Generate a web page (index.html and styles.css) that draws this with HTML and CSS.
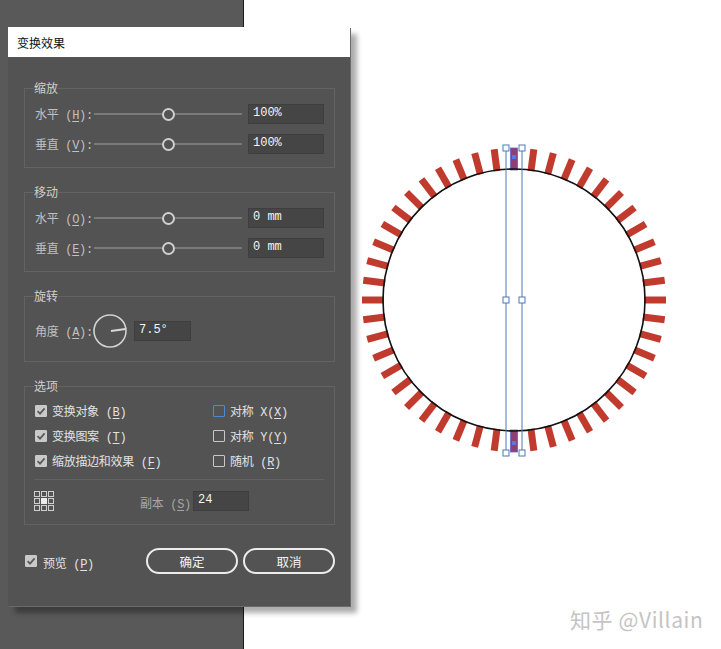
FILE: index.html
```html
<!DOCTYPE html>
<html lang="zh">
<head>
<meta charset="utf-8">
<title>变换效果</title>
<link rel="stylesheet" href="styles.css">
</head>
<body>
<div class="app">
  <div class="side"></div>
  <div class="canvas">
    <svg class="art" width="477" height="649" viewBox="0 0 477 649">
      <defs>
        <rect id="t" x="-3.5" y="-152" width="7" height="22" fill="#c13a2e"/>
        <g id="sel">
          <rect x="-3.5" y="-152" width="7" height="22" fill="#8f3f78" stroke="#6a63c4" stroke-width="0.8"/>
          <rect x="-2" y="-145" width="4" height="4" fill="#5f74ea"/>
        </g>
      </defs>
      <g transform="translate(270 300)">
        <use href="#t" transform="rotate(7.5)"/>
        <use href="#t" transform="rotate(15)"/>
        <use href="#t" transform="rotate(22.5)"/>
        <use href="#t" transform="rotate(30)"/>
        <use href="#t" transform="rotate(37.5)"/>
        <use href="#t" transform="rotate(45)"/>
        <use href="#t" transform="rotate(52.5)"/>
        <use href="#t" transform="rotate(60)"/>
        <use href="#t" transform="rotate(67.5)"/>
        <use href="#t" transform="rotate(75)"/>
        <use href="#t" transform="rotate(82.5)"/>
        <use href="#t" transform="rotate(90)"/>
        <use href="#t" transform="rotate(97.5)"/>
        <use href="#t" transform="rotate(105)"/>
        <use href="#t" transform="rotate(112.5)"/>
        <use href="#t" transform="rotate(120)"/>
        <use href="#t" transform="rotate(127.5)"/>
        <use href="#t" transform="rotate(135)"/>
        <use href="#t" transform="rotate(142.5)"/>
        <use href="#t" transform="rotate(150)"/>
        <use href="#t" transform="rotate(157.5)"/>
        <use href="#t" transform="rotate(165)"/>
        <use href="#t" transform="rotate(172.5)"/>
        <use href="#t" transform="rotate(187.5)"/>
        <use href="#t" transform="rotate(195)"/>
        <use href="#t" transform="rotate(202.5)"/>
        <use href="#t" transform="rotate(210)"/>
        <use href="#t" transform="rotate(217.5)"/>
        <use href="#t" transform="rotate(225)"/>
        <use href="#t" transform="rotate(232.5)"/>
        <use href="#t" transform="rotate(240)"/>
        <use href="#t" transform="rotate(247.5)"/>
        <use href="#t" transform="rotate(255)"/>
        <use href="#t" transform="rotate(262.5)"/>
        <use href="#t" transform="rotate(270)"/>
        <use href="#t" transform="rotate(277.5)"/>
        <use href="#t" transform="rotate(285)"/>
        <use href="#t" transform="rotate(292.5)"/>
        <use href="#t" transform="rotate(300)"/>
        <use href="#t" transform="rotate(307.5)"/>
        <use href="#t" transform="rotate(315)"/>
        <use href="#t" transform="rotate(322.5)"/>
        <use href="#t" transform="rotate(330)"/>
        <use href="#t" transform="rotate(337.5)"/>
        <use href="#t" transform="rotate(345)"/>
        <use href="#t" transform="rotate(352.5)"/>
        <use href="#sel"/>
        <use href="#sel" transform="rotate(180)"/>
        <circle r="131" fill="none" stroke="#111" stroke-width="1.6"/>
        <g stroke="#4b78b8" stroke-width="1" fill="none">
          <line x1="-8" y1="-152" x2="-8" y2="153"/>
          <line x1="8" y1="-152" x2="8" y2="153"/>
        </g>
        <g stroke="#4b78b8" stroke-width="1" fill="#fff">
          <rect x="-11" y="-155" width="6" height="6"/>
          <rect x="5" y="-155" width="6" height="6"/>
          <rect x="-11" y="-3" width="6" height="6"/>
          <rect x="5" y="-3" width="6" height="6"/>
          <rect x="-11" y="150" width="6" height="6"/>
          <rect x="5" y="150" width="6" height="6"/>
        </g>
      </g>
    </svg>
    <div class="watermark">知乎 @Villain</div>
  </div>

  <div class="dialog">
    <div class="titlebar">变换效果</div>
    <div class="dbody">
      <fieldset class="group">
        <legend>缩放</legend>
        <div class="rows">
          <div class="srow">
            <span class="lbl">水平 (<u>H</u>):</span>
            <div class="slider"><span class="seg"></span><span class="knob"></span><span class="seg"></span></div>
            <div class="field wide">100%</div>
          </div>
          <div class="srow">
            <span class="lbl">垂直 (<u>V</u>):</span>
            <div class="slider"><span class="seg"></span><span class="knob"></span><span class="seg"></span></div>
            <div class="field wide">100%</div>
          </div>
        </div>
      </fieldset>

      <fieldset class="group">
        <legend>移动</legend>
        <div class="rows">
          <div class="srow">
            <span class="lbl">水平 (<u>O</u>):</span>
            <div class="slider"><span class="seg"></span><span class="knob"></span><span class="seg"></span></div>
            <div class="field wide">0 mm</div>
          </div>
          <div class="srow">
            <span class="lbl">垂直 (<u>E</u>):</span>
            <div class="slider"><span class="seg"></span><span class="knob"></span><span class="seg"></span></div>
            <div class="field wide">0 mm</div>
          </div>
        </div>
      </fieldset>

      <fieldset class="group">
        <legend>旋转</legend>
        <div class="rrow">
          <span class="lbl rl">角度 (<u>A</u>):</span>
          <svg class="dial" width="34" height="34" viewBox="0 0 34 34">
            <circle cx="17" cy="17" r="16" fill="none" stroke="#d2d2d2" stroke-width="1.6"/>
            <line x1="18" y1="17" x2="32.5" y2="15" stroke="#d8d8d8" stroke-width="2"/>
          </svg>
          <div class="field angle">7.5°</div>
        </div>
      </fieldset>

      <fieldset class="group opts-group">
        <legend>选项</legend>
        <div class="opts">
          <div class="opt"><span class="cb on"><svg width="12" height="12" viewBox="0 0 12 12"><path d="M2.6 6.2 L5 8.6 L9.6 3.4" fill="none" stroke="#5b5b5b" stroke-width="1.8"/></svg></span><span class="otext">变换对象 (<u>B</u>)</span></div>
          <div class="opt"><span class="cb focus"></span><span class="otext">对称 X(<u>X</u>)</span></div>
          <div class="opt"><span class="cb on"><svg width="12" height="12" viewBox="0 0 12 12"><path d="M2.6 6.2 L5 8.6 L9.6 3.4" fill="none" stroke="#5b5b5b" stroke-width="1.8"/></svg></span><span class="otext">变换图案 (<u>T</u>)</span></div>
          <div class="opt"><span class="cb"></span><span class="otext">对称 Y(<u>Y</u>)</span></div>
          <div class="opt"><span class="cb on"><svg width="12" height="12" viewBox="0 0 12 12"><path d="M2.6 6.2 L5 8.6 L9.6 3.4" fill="none" stroke="#5b5b5b" stroke-width="1.8"/></svg></span><span class="otext">缩放描边和效果 (<u>F</u>)</span></div>
          <div class="opt"><span class="cb"></span><span class="otext">随机 (<u>R</u>)</span></div>
        </div>
        <div class="sep"></div>
        <div class="copies">
          <svg class="grid" width="20" height="20" viewBox="0 0 20 20">
            <g fill="none" stroke="#cfcfcf" stroke-width="1">
              <rect x="0.5" y="0.5" width="5" height="5"/>
              <rect x="7.5" y="0.5" width="5" height="5"/>
              <rect x="14.5" y="0.5" width="5" height="5"/>
              <rect x="0.5" y="7.5" width="5" height="5"/>
              <rect x="14.5" y="7.5" width="5" height="5"/>
              <rect x="0.5" y="14.5" width="5" height="5"/>
              <rect x="7.5" y="14.5" width="5" height="5"/>
              <rect x="14.5" y="14.5" width="5" height="5"/>
            </g>
            <rect x="7" y="7" width="6" height="6" fill="#ececec"/>
          </svg>
          <span class="clbl">副本 (<u>S</u>)</span>
          <div class="field copy">24</div>
        </div>
      </fieldset>

      <div class="foot">
        <div class="preview"><span class="cb on"><svg width="12" height="12" viewBox="0 0 12 12"><path d="M2.6 6.2 L5 8.6 L9.6 3.4" fill="none" stroke="#5b5b5b" stroke-width="1.8"/></svg></span><span class="ptext">预览 (<u>P</u>)</span></div>
        <div class="btns">
          <div class="btn">确定</div>
          <div class="btn">取消</div>
        </div>
      </div>
    </div>
  </div>
</div>
</body>
</html>
```
FILE: styles.css
```css
* { box-sizing: border-box; }
html, body { margin: 0; padding: 0; }
body {
  width: 721px;
  height: 649px;
  overflow: hidden;
  background: #595959;
  font-family: "Noto Sans CJK SC", "Noto Sans", sans-serif;
  font-size: 12px;
}
.app {
  position: relative;
  display: flex;
  width: 721px;
  height: 649px;
}
.side {
  flex: none;
  width: 244px;
  background: #595959;
  border-right: 1px solid #1a1a1a;
}
.canvas {
  position: relative;
  flex: 1;
  background: #ffffff;
}
.art { display: block; }
.watermark {
  position: absolute;
  left: 326px;
  top: 605px;
  font-size: 21px;
  line-height: 28px;
  letter-spacing: 0.6px;
  color: #c4c4c4;
  white-space: nowrap;
}

.dialog {
  position: absolute;
  left: 8px;
  top: 27px;
  width: 342px;
  height: 579px;
  background: #535353;
  box-shadow: 1px 1px 0 #6a6a6a, 7px 7px 5px rgba(0, 0, 0, 0.32);
  display: flex;
  flex-direction: column;
}
.titlebar {
  height: 30px;
  flex: none;
  background: #ffffff;
  color: #111;
  display: flex;
  align-items: center;
  padding-left: 9px;
  font-size: 12px;
}
.dbody {
  flex: 1;
  display: flex;
  flex-direction: column;
  padding: 23px 15px 30px 16px;
}
u { text-decoration: underline; text-underline-offset: 2px; }

.lbl, .otext, .ptext, .clbl {
  font-family: "Liberation Mono", "Noto Sans CJK SC", monospace;
  letter-spacing: -0.3px;
  padding-top: 3px;
}

.group {
  margin: 0;
  min-width: 0;
  border: 1px solid #636363;
  padding: 0 10px 13px 10px;
}
.group + .group { margin-top: 16px; }
.group legend {
  padding: 0;
  margin-left: -1px;
  font-size: 12px;
  line-height: 16px;
  color: #cfcfcf;
}
.rows {
  display: flex;
  flex-direction: column;
  gap: 10px;
  padding-top: 8px;
}
.srow {
  display: flex;
  align-items: center;
  height: 20px;
}
.lbl {
  flex: none;
  width: 59px;
  color: #c0c0c0;
  white-space: nowrap;
  line-height: 18px;
}
.slider {
  flex: none;
  width: 148px;
  display: flex;
  align-items: center;
}
.seg {
  flex: 1;
  height: 2px;
  background: #7a7a7a;
}
.knob {
  flex: none;
  width: 13px;
  height: 13px;
  border-radius: 50%;
  border: 2.5px solid #d0d0d0;
}
.field {
  flex: none;
  height: 20px;
  background: #454545;
  border: 1px solid #3e3e3e;
  color: #f4f4f4;
  font-family: "Liberation Mono", "DejaVu Sans Mono", monospace;
  font-size: 12px;
  line-height: 17px;
  padding-left: 4px;
  white-space: nowrap;
}
.field.wide { width: 76px; margin-left: 6px; }

.rrow {
  display: flex;
  align-items: center;
  padding-top: 10px;
}
.rl { width: 58px; }
.dial { display: block; flex: none; }
.field.angle { width: 57px; margin-left: 7px; }

.opts {
  display: grid;
  grid-template-columns: 178px auto;
  row-gap: 9px;
  padding-top: 9px;
}
.opt {
  display: flex;
  align-items: center;
  height: 16px;
  white-space: nowrap;
}
.cb {
  flex: none;
  width: 12px;
  height: 12px;
  border: 1px solid #c8c8c8;
  border-radius: 1px;
  display: block;
}
.cb svg { display: block; margin: -1px; }
.cb.on { background: #c9c9c9; border-color: #c9c9c9; }
.cb.focus { border-color: #4d8ad6; }
.otext {
  margin-left: 5px;
  color: #e2e2e2;
  line-height: 16px;
}
.sep {
  height: 1px;
  background: #626262;
  margin-top: 10px;
  margin-left: -1px;
}
.copies {
  display: flex;
  align-items: center;
  height: 20px;
  margin-top: 11px;
  margin-left: -1px;
}
.grid { display: block; flex: none; }
.clbl {
  margin-left: 86px;
  width: 53px;
  color: #a6a6a6;
  white-space: nowrap;
}
.field.copy { width: 56px; }

.foot {
  margin-top: 23px;
  display: flex;
  align-items: center;
  justify-content: space-between;
  padding-left: 1px;
}
.preview {
  display: flex;
  align-items: center;
}
.ptext {
  margin-left: 6px;
  color: #e2e2e2;
}
.btns {
  display: flex;
  gap: 5px;
}
.btn {
  width: 92px;
  height: 26px;
  border: 2px solid #ececec;
  border-radius: 13px;
  color: #f2f2f2;
  display: flex;
  align-items: center;
  justify-content: center;
  font-size: 12.5px;
}
```
